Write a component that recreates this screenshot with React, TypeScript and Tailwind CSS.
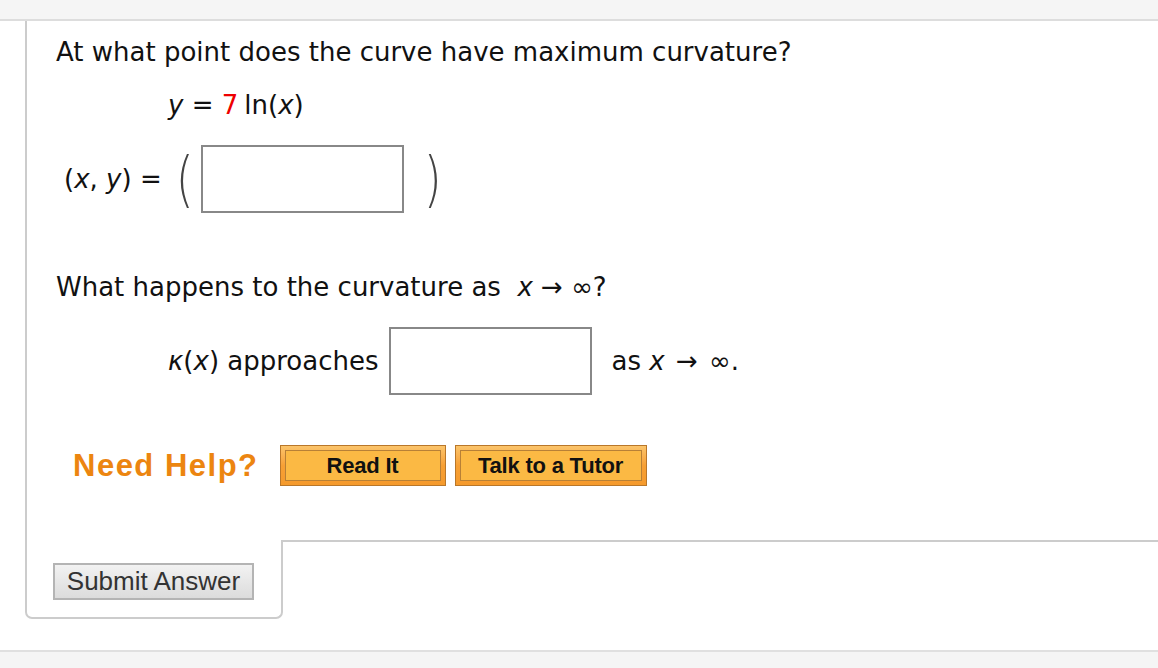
import React from 'react'

const mathFont = { fontFamily: '"DejaVu Sans", Verdana, sans-serif' }

function AnswerBox() {
  return <div className="h-[68px] w-[203px] shrink-0 border-2 border-[#888] bg-white" />
}

function HelpButton({ label, width }: { label: string; width: string }) {
  return (
    <div
      className={`${width} h-[41px] border border-[#b9772a] bg-gradient-to-b from-[#fbc46a] via-[#f7a035] to-[#f59a2c] p-[4px]`}
    >
      <div className="flex h-full items-center justify-center border border-[#b88036] bg-[#fbb944] pt-[1px] font-['Liberation_Sans',Arial,sans-serif] text-[22px] font-bold leading-none tracking-[-0.2px] text-[#111]">
        {label}
      </div>
    </div>
  )
}

export default function App() {
  return (
    <div
      className="flex h-[668px] w-full flex-col bg-white text-[26px] text-[#111]"
      style={mathFont}
    >
      <div className="h-[21px] shrink-0 border-b-2 border-[#dddddd] bg-[#f5f5f5]" />

      <div className="pl-[25px]">
        <div className="border-l-2 border-[#cccccc] pl-[29px] pt-[15px] pb-[54px]">
          <p className="leading-[32px]">At what point does the curve have maximum curvature?</p>

          <p className="mt-[21px] pl-[112px] leading-[32px]">
            <i>y</i> = <span className="text-[#ee0000]">7</span>
            <span className="ml-[6px]">ln(</span>
            <i>x</i>)
          </p>

          <div className="mt-[24px] flex items-center pl-[8px]">
            <span className="leading-[32px]">
              (<i>x</i>, <i>y</i>) =
            </span>
            <span className="ml-[14px] mr-[11px] inline-block w-[14px] scale-y-[1.3] text-[46px] leading-none font-extralight text-[#444]">
              (
            </span>
            <AnswerBox />
            <span className="ml-[20px] inline-block scale-y-[1.3] text-[46px] leading-none font-extralight text-[#444]">
              )
            </span>
          </div>

          <p className="mt-[58px] leading-[32px]">
            What happens to the curvature as&nbsp; <i>x</i> → ∞?
          </p>

          <div className="mt-[24px] flex items-center pl-[112px]">
            <span className="leading-[32px]">
              <i>κ</i>(<i>x</i>) approaches
            </span>
            <div className="ml-[10px]">
              <AnswerBox />
            </div>
            <span className="ml-[20px] leading-[32px]">
              as <i>x</i> <span className="mx-[3px]">→</span> ∞.
            </span>
          </div>

          <div className="mt-[50px] flex h-[41px] items-center">
            <span className="ml-[17px] mr-[21px] font-['Liberation_Sans',Arial,sans-serif] text-[31px] leading-none font-bold tracking-[1.5px] text-[#ec8510]">
              Need Help?
            </span>
            <HelpButton label="Read It" width="w-[166px]" />
            <div className="ml-[9px]">
              <HelpButton label="Talk to a Tutor" width="w-[192px]" />
            </div>
          </div>
        </div>

        <div className="flex">
          <div className="w-[258px] shrink-0 rounded-b-[7px] border-x-2 border-b-2 border-[#cccccc] pt-[22px] pb-[16px] pl-[26px]">
            <button
              type="button"
              className="h-[37px] w-[201px] border-2 border-[#b4b4b4] bg-gradient-to-b from-[#f2f2f2] to-[#dcdcdc] font-['Liberation_Sans',Arial,sans-serif] text-[26px] leading-none text-[#333]"
            >
              Submit Answer
            </button>
          </div>
          <div className="flex-1 border-t-2 border-[#cccccc]" />
        </div>
      </div>

      <div className="mt-auto h-[18px] shrink-0 border-t-2 border-[#e0e0e0] bg-[#f5f5f5]" />
    </div>
  )
}
